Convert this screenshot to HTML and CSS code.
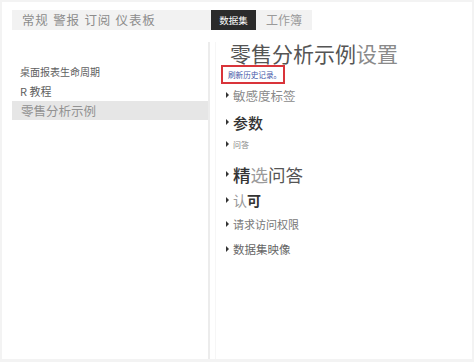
FILE: index.html
```html
<!DOCTYPE html>
<html lang="zh">
<head>
<meta charset="utf-8">
<link rel="stylesheet" href="styles.css">
</head>
<body>
<div class="frame">
  <div class="topbar">
    <div class="tabs">
      <span class="tab-plain">常规 警报 订阅 仪表板</span>
      <span class="tab-active">数据集</span>
      <span class="tab-work">工作簿</span>
    </div>
  </div>
  <div class="main">
    <div class="left">
      <div class="nav-item nav-a">桌面报表生命周期</div>
      <div class="nav-item nav-b">R 教程</div>
      <div class="nav-item nav-sel">零售分析示例</div>
    </div>
    <div class="divider"></div>
    <div class="right">
      <div class="title"><span class="t-dark">零售分析示例</span><span class="t-light">设置</span></div>
      <div class="refresh">刷新历史记录。</div>
      <div class="sec s1"><span class="tri"></span>敏感度标签</div>
      <div class="sec s2"><span class="tri"></span>参数</div>
      <div class="sec s3"><span class="tri"></span>问答</div>
      <div class="sec s4"><span class="tri"></span><span class="b">精</span><span class="l">选</span>问答</div>
      <div class="sec s5"><span class="tri"></span><span class="l">认</span><span class="b">可</span></div>
      <div class="sec s6"><span class="tri"></span>请求访问权限</div>
      <div class="sec s7"><span class="tri"></span>数据集映像</div>
    </div>
  </div>
</div>
</body>
</html>
```
FILE: styles.css
```css
html, body {
  margin: 0;
  padding: 0;
}
body {
  background: #f3f3f3;
  font-family: "Noto Sans CJK SC", "Noto Sans", sans-serif;
  width: 474px;
  height: 362px;
  overflow: hidden;
}
.frame {
  margin: 2px 2px 0 2px;
  height: 357px;
  background: #ffffff;
  display: flex;
  flex-direction: column;
}
.topbar {
  padding: 8px 0 0 10px;
  height: 20px;
}
.tabs {
  width: 300px;
  height: 20px;
  background: #f2f2f2;
  display: flex;
  align-items: center;
}
.tab-plain {
  font-size: 12.5px;
  color: #8c8c8c;
  padding-left: 10px;
  letter-spacing: 0.8px;
  word-spacing: 1px;
  line-height: 20px;
  width: 189px;
}
.tab-active {
  background: #2b2b2b;
  color: #ffffff;
  font-size: 9.5px;
  width: 45px;
  height: 20px;
  line-height: 20px;
  text-align: center;
}
.tab-work {
  font-size: 12px;
  color: #9a9a9a;
  padding-left: 10px;
  line-height: 20px;
}
.main {
  flex: 1;
  display: flex;
  padding-top: 12px;
}
.left {
  width: 206px;
  padding-top: 21px;
}
.nav-item {
  padding-left: 18px;
  color: #606060;
}
.nav-a {
  font-size: 10px;
  height: 18px;
  line-height: 18px;
}
.nav-b {
  font-size: 11px;
  height: 20px;
  line-height: 20px;
}
.nav-sel {
  margin-left: 10px;
  padding-left: 9px;
  font-size: 12.5px;
  height: 19px;
  line-height: 19px;
  background: #e6e6e6;
  color: #929292;
}
.divider {
  width: 2px;
  background: #ececec;
}
.right {
  flex: 1;
  padding-left: 12px;
  border-left: 1px solid #f6f6f6;
  margin-left: 5px;
  display: flex;
  flex-direction: column;
  align-items: flex-start;
}
.title {
  font-size: 21px;
  line-height: 22px;
  margin-left: 2px;
  height: 22px;
  white-space: nowrap;
}
.t-dark { color: #555555; }
.t-light { color: #8a8a8a; }
.refresh {
  margin-left: -7px;
  margin-top: 1px;
  border: 2px solid #d9343a;
  font-size: 7.6px;
  color: #3f55a8;
  padding: 0 2px 0 5px;
  height: 15px;
  line-height: 15px;
  white-space: nowrap;
}
.sec {
  display: flex;
  align-items: center;
  white-space: nowrap;
}
.tri {
  width: 0;
  height: 0;
  border-top: 3px solid transparent;
  border-bottom: 3px solid transparent;
  border-left: 3px solid #333333;
  margin-left: -2px;
  margin-right: 4px;
}
.s1 { font-size: 12.5px; color: #8a8a8a; height: 20px; margin-top: 1px; }
.s2 { font-size: 15px; color: #333333; height: 22px; margin-top: 6px; font-weight: 500; }
.s3 { font-size: 8px; color: #888888; height: 12px; margin-top: 5px; }
.s4 { font-size: 17.5px; color: #555555; height: 24px; margin-top: 12px; }
.s4 .b { color: #333333; font-weight: 500; }
.s4 .l { color: #9a9a9a; }
.s5 { font-size: 14px; color: #444444; height: 20px; margin-top: 4px; }
.s5 .l { color: #9a9a9a; }
.s5 .b { color: #333333; font-weight: 700; }
.s6 { font-size: 11px; color: #777777; height: 16px; margin-top: 6px; }
.s7 { font-size: 11.5px; color: #666666; height: 16px; margin-top: 9px; }
```
